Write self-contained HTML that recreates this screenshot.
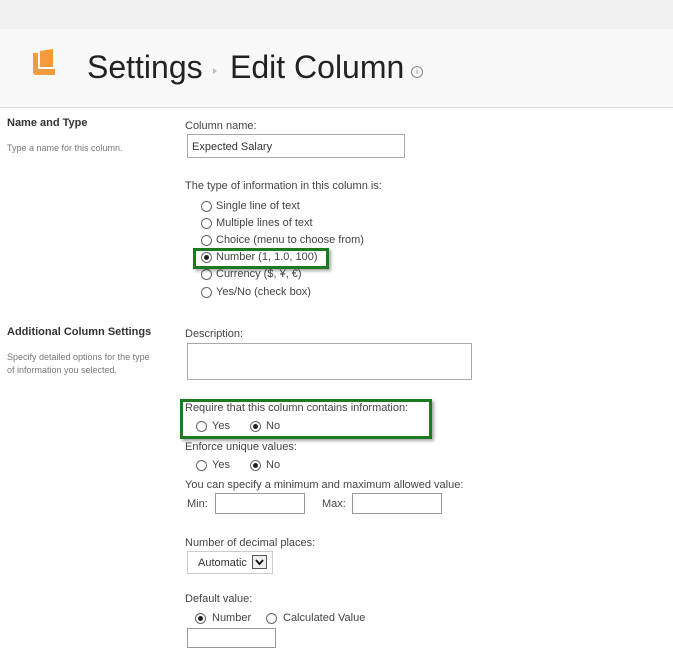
<!DOCTYPE html>
<html><head><style>
body{margin:0;width:673px;height:663px;background:#fff;font-family:"Liberation Sans",sans-serif;color:#444;position:relative;overflow:hidden}
.a{position:absolute;white-space:nowrap}
.t{font-size:11px;color:#444;margin-top:1px}
.s{font-size:9px;color:#777;margin-top:1px}
.b{font-size:11px;color:#333;font-weight:bold;margin-top:1px}
.r{position:absolute;width:9px;height:9px;border:1px solid #666;border-radius:50%;background:#fff;margin-top:1px}
.r.on::after{content:"";position:absolute;left:2px;top:2px;width:5px;height:5px;border-radius:50%;background:#222}
.in{position:absolute;border:1px solid #aaa;background:#fff;box-sizing:border-box}
.g{position:absolute;border:3px solid #1e7a1e;box-shadow:2px 2px 3px rgba(0,0,0,.35);box-sizing:border-box}
</style></head><body>
<div class="a" style="left:0;top:0;width:673px;height:29px;background:#f0f0f0"></div>
<div class="a" style="left:0;top:29px;width:673px;height:78px;background:#f8f8f8;border-bottom:1px solid #ddd"></div>
<svg class="a" style="left:31px;top:49px" width="26" height="27" viewBox="0 0 26 27"><path d="M9 2 L22 0 L22 18 L9 18 Z" fill="#f39a3a"/><path d="M2 4 L7 4 L7 20 L24 20 L24 26 L4 26 L2 24 Z" fill="#f39a3a"/></svg>
<div class="a" style="left:87px;top:49px;font-size:32px;color:#222">Settings</div>
<div class="a" style="left:213px;top:68px;width:0;height:0;border-left:4px solid #bbb;border-top:3px solid transparent;border-bottom:3px solid transparent"></div>
<div class="a" style="left:230px;top:49px;font-size:32px;color:#222">Edit Column</div>
<div class="a" style="left:411px;top:66px;width:10px;height:10px;border:1px solid #888;border-radius:50%;font-size:8px;line-height:10px;text-align:center;color:#888">i</div>

<div class="a b" style="left:7px;top:116px">Name and Type</div>
<div class="a s" style="left:7px;top:142px">Type a name for this column.</div>
<div class="a t" style="left:185px;top:119px">Column name:</div>
<div class="in" style="left:187px;top:134px;width:218px;height:24px"></div>
<div class="a t" style="left:192px;top:140px;color:#333">Expected Salary</div>
<div class="a t" style="left:185px;top:179px">The type of information in this column is:</div>
<div class="r" style="left:201px;top:200px"></div><div class="a t" style="left:216px;top:199px">Single line of text</div>
<div class="r" style="left:201px;top:217px"></div><div class="a t" style="left:216px;top:216px">Multiple lines of text</div>
<div class="r" style="left:201px;top:234px"></div><div class="a t" style="left:216px;top:233px">Choice (menu to choose from)</div>
<div class="r on" style="left:201px;top:251px"></div><div class="a t" style="left:216px;top:250px">Number (1, 1.0, 100)</div>
<div class="r" style="left:201px;top:268px"></div><div class="a t" style="left:216px;top:267px">Currency ($, ¥, €)</div>
<div class="r" style="left:201px;top:286px"></div><div class="a t" style="left:216px;top:285px">Yes/No (check box)</div>
<div class="g" style="left:193px;top:248px;width:136px;height:21px"></div>

<div class="a b" style="left:7px;top:325px">Additional Column Settings</div>
<div class="a s" style="left:7px;top:351px">Specify detailed options for the type</div>
<div class="a s" style="left:7px;top:364px">of information you selected.</div>
<div class="a t" style="left:185px;top:327px">Description:</div>
<div class="in" style="left:187px;top:343px;width:285px;height:37px"></div>
<div class="a t" style="left:185px;top:401px">Require that this column contains information:</div>
<div class="r" style="left:196px;top:420px"></div><div class="a t" style="left:212px;top:419px">Yes</div>
<div class="r on" style="left:250px;top:420px"></div><div class="a t" style="left:266px;top:419px">No</div>
<div class="g" style="left:180px;top:399px;width:252px;height:40px"></div>
<div class="a t" style="left:185px;top:440px">Enforce unique values:</div>
<div class="r" style="left:196px;top:459px"></div><div class="a t" style="left:212px;top:458px">Yes</div>
<div class="r on" style="left:250px;top:459px"></div><div class="a t" style="left:266px;top:458px">No</div>
<div class="a t" style="left:185px;top:478px">You can specify a minimum and maximum allowed value:</div>
<div class="a t" style="left:187px;top:497px">Min:</div>
<div class="in" style="left:215px;top:493px;width:90px;height:21px;border-color:#999"></div>
<div class="a t" style="left:322px;top:497px">Max:</div>
<div class="in" style="left:352px;top:493px;width:90px;height:21px;border-color:#999"></div>
<div class="a t" style="left:185px;top:536px">Number of decimal places:</div>
<div class="in" style="left:187px;top:551px;width:86px;height:23px;border-color:#ccc"></div>
<div class="a t" style="left:198px;top:556px;color:#333">Automatic</div>
<div class="a" style="left:252px;top:555px;width:15px;height:14px;border:1px solid #555;box-sizing:border-box;background:#eee"></div>
<svg class="a" style="left:254px;top:557px" width="11" height="10"><path d="M2 3 L5.5 7 L9 3" stroke="#111" stroke-width="1.8" fill="none"/></svg>
<div class="a t" style="left:185px;top:592px">Default value:</div>
<div class="r on" style="left:195px;top:612px"></div><div class="a t" style="left:212px;top:611px">Number</div>
<div class="r" style="left:266px;top:612px"></div><div class="a t" style="left:283px;top:611px">Calculated Value</div>
<div class="in" style="left:187px;top:628px;width:89px;height:20px;border-color:#999"></div>
</body></html>
